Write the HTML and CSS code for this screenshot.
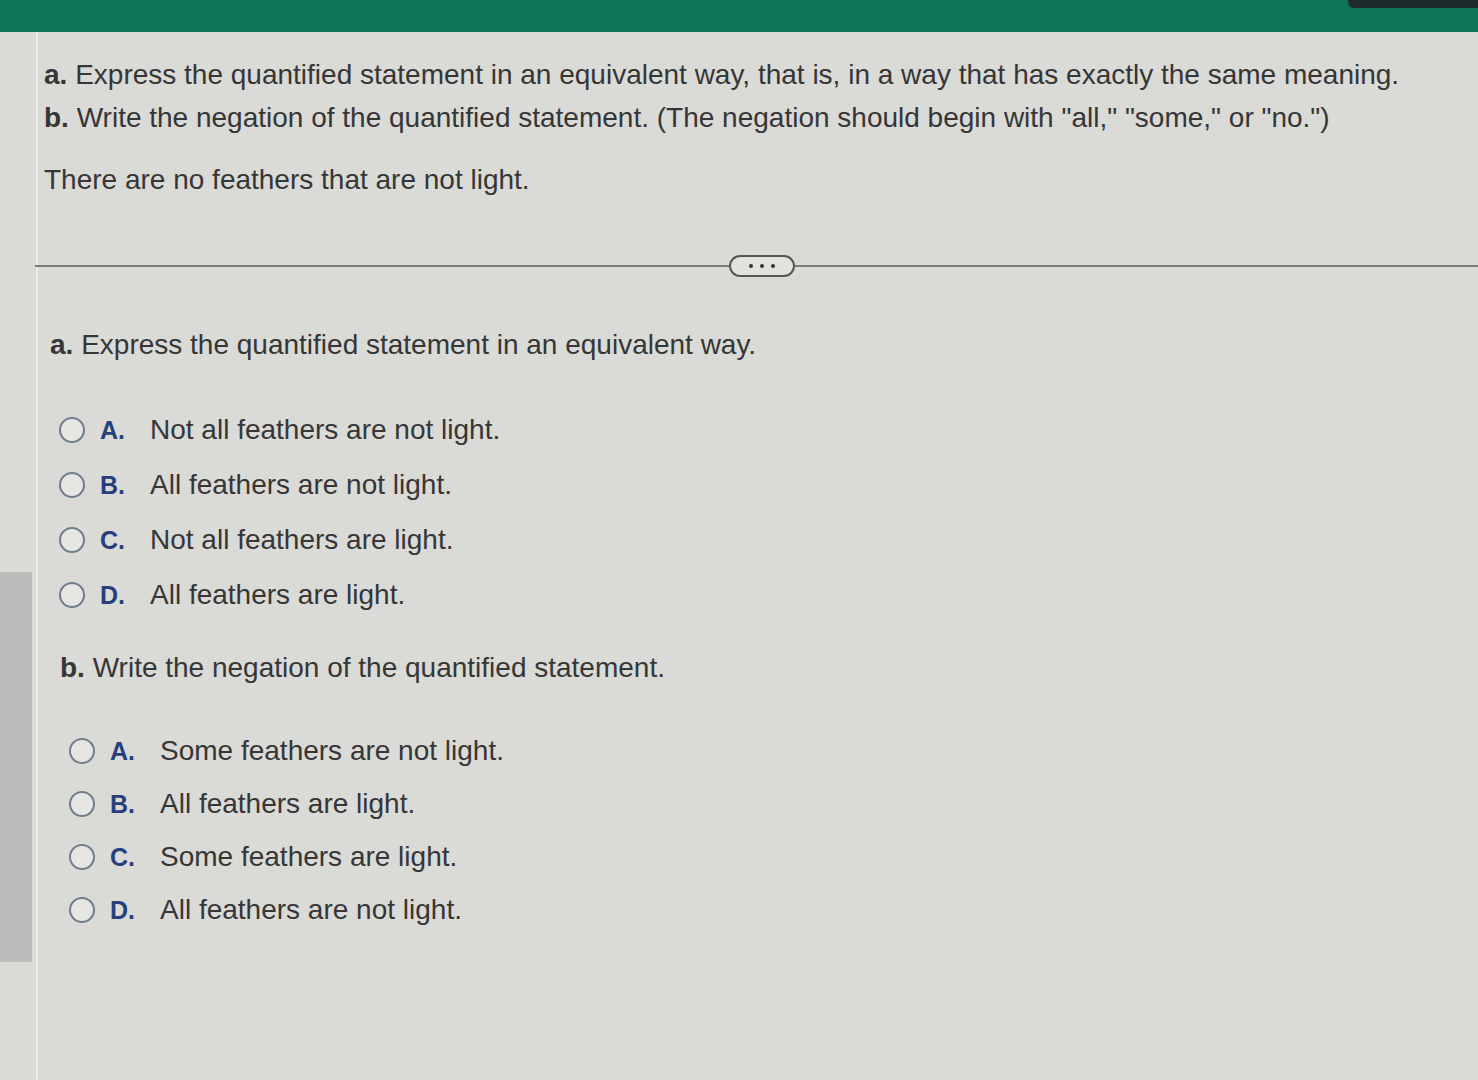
FILE: index.html
```html
<!DOCTYPE html>
<html>
<head>
<meta charset="utf-8">
<link rel="stylesheet" href="styles.css">
</head>
<body>
<div class="page">
  <header class="topbar"><div class="topbar-dark"></div></header>
  <div class="main">
    <aside class="rail"><div class="rail-thumb"></div></aside>
    <div class="content">
      <section class="question">
        <p class="line"><b class="tag">a.</b> Express the quantified statement in an equivalent way, that is, in a way that has exactly the same meaning.</p>
        <p class="line"><b class="tag">b.</b> Write the negation of the quantified statement. (The negation should begin with "all," "some," or "no.")</p>
        <p class="statement">There are no feathers that are not light.</p>
      </section>
      <div class="divider"><span class="pill"><i></i><i></i><i></i></span></div>
      <section class="part part-a">
        <p class="prompt"><b class="tag">a.</b> Express the quantified statement in an equivalent way.</p>
        <ul class="options">
          <li><span class="radio"></span><b class="letter">A.</b><span>Not all feathers are not light.</span></li>
          <li><span class="radio"></span><b class="letter">B.</b><span>All feathers are not light.</span></li>
          <li><span class="radio"></span><b class="letter">C.</b><span>Not all feathers are light.</span></li>
          <li><span class="radio"></span><b class="letter">D.</b><span>All feathers are light.</span></li>
        </ul>
      </section>
      <section class="part part-b">
        <p class="prompt"><b class="tag">b.</b> Write the negation of the quantified statement.</p>
        <ul class="options">
          <li><span class="radio"></span><b class="letter">A.</b><span>Some feathers are not light.</span></li>
          <li><span class="radio"></span><b class="letter">B.</b><span>All feathers are light.</span></li>
          <li><span class="radio"></span><b class="letter">C.</b><span>Some feathers are light.</span></li>
          <li><span class="radio"></span><b class="letter">D.</b><span>All feathers are not light.</span></li>
        </ul>
      </section>
    </div>
  </div>
</div>
</body>
</html>
```
FILE: styles.css
```css
* { box-sizing: border-box; }
html, body { margin: 0; padding: 0; }
body {
  background: #dadad7;
  font-family: "Liberation Sans", Arial, sans-serif;
  color: #363636;
  width: 1478px;
  height: 1080px;
  overflow: hidden;
}
.page { display: flex; flex-direction: column; height: 1080px; }
.topbar {
  height: 32px;
  background: #0f7559;
  display: flex;
  justify-content: flex-end;
  flex-shrink: 0;
}
.topbar-dark {
  width: 130px;
  height: 8px;
  background: #1d2b2a;
  border-bottom-left-radius: 6px;
}
.main { display: flex; flex: 1; }
.rail {
  width: 38px;
  border-right: 2px solid #ececea;
  display: flex;
  flex-direction: column;
  padding-top: 540px;
  flex-shrink: 0;
}
.rail-thumb {
  width: 32px;
  height: 390px;
  background: #bcbcba;
}
.content { flex: 1; padding-top: 21px; }
.question { padding-left: 6px; }
.line {
  margin: 0;
  font-size: 28px;
  line-height: 43px;
}
.tag { font-weight: bold; }
.statement {
  margin: 21px 0 0;
  font-size: 28px;
  line-height: 40px;
}
.divider {
  margin-top: 65px;
  margin-left: -3px;
  height: 2px;
  background: #7a7a78;
  display: flex;
  align-items: center;
}
.pill {
  margin-left: 694px;
  width: 66px;
  height: 22px;
  border: 2px solid #555;
  border-radius: 11px;
  background: #e2e2df;
  display: flex;
  align-items: center;
  justify-content: center;
  gap: 7px;
}
.pill i {
  width: 4px;
  height: 4px;
  border-radius: 50%;
  background: #333;
}
.part-a { padding-left: 12px; margin-top: 58px; }
.part-b { padding-left: 22px; margin-top: 33px; }
.prompt {
  margin: 0;
  font-size: 28px;
  line-height: 40px;
}
.options {
  list-style: none;
  margin: 45px 0 0;
  padding: 0 0 0 9px;
  display: flex;
  flex-direction: column;
  gap: 15px;
}
.part-b .options { gap: 13px; margin-top: 43px; }
.options li {
  display: flex;
  align-items: center;
  height: 40px;
  font-size: 28px;
}
.radio {
  width: 26px;
  height: 26px;
  border: 2px solid #6f7d8c;
  border-radius: 50%;
  background: #e6e6e3;
  margin-right: 15px;
  flex-shrink: 0;
}
.letter {
  color: #25407a;
  font-weight: bold;
  font-size: 25px;
  width: 50px;
}
```
